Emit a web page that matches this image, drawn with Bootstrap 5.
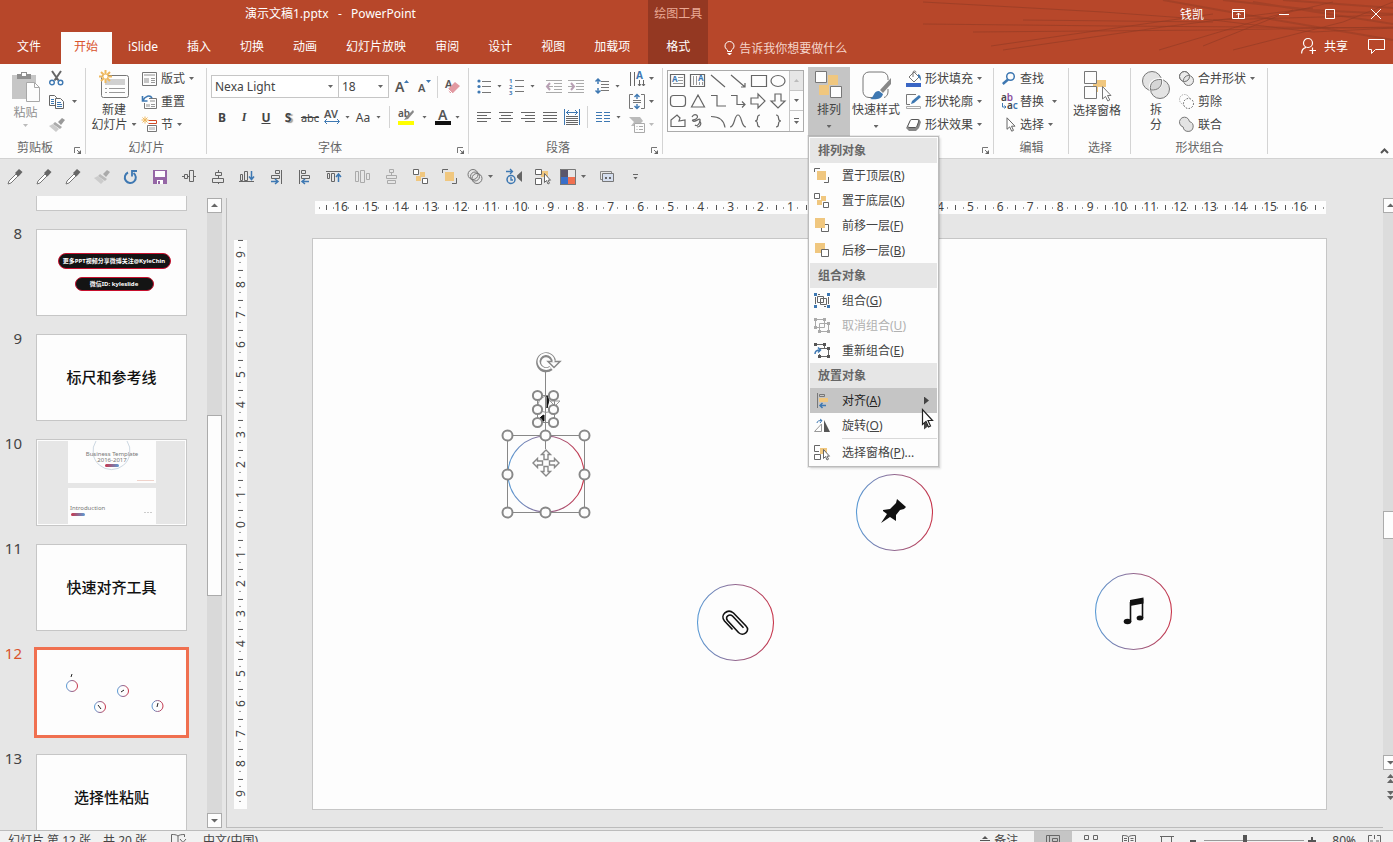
<!DOCTYPE html>
<html lang="zh-CN">
<head>
<meta charset="utf-8">
<meta name="viewport" content="width=device-width, initial-scale=1">
<title>演示文稿1.pptx - PowerPoint</title>
<link href="https://cdn.jsdelivr.net/npm/bootstrap@5.3.0/dist/css/bootstrap.min.css" rel="stylesheet">
<style>
:root{--brand:#b7472a;--brand-dark:#943822;--paper:#fdfdfd;--chrome:#e6e6e6;--line:#c6c6c6;--ink:#444;--blue:#3e78b2;--gold:#f0c77f}
html,body{height:100%;overflow:hidden}
body{font-family:"Noto Sans","Noto Sans CJK SC",sans-serif;font-size:12px;line-height:15px;color:var(--ink);background:var(--chrome)}
svg{display:block;flex:none;overflow:visible}
.app{height:calc(100vh + 8px)}
.btn{--bs-btn-padding-x:0;--bs-btn-padding-y:0;--bs-btn-border-width:0px;--bs-btn-border-radius:0;--bs-btn-font-size:12px;--bs-btn-line-height:15px;--bs-btn-color:var(--ink);--bs-btn-hover-bg:#d5d5d5;--bs-btn-active-bg:#c5c5c5;display:inline-flex;align-items:center;justify-content:center;flex:none;white-space:nowrap}
.btn:disabled{opacity:1;color:#8f8f8f}
.dn{width:5px;height:3px;background:#666;clip-path:polygon(0 0,100% 0,50% 100%);flex:none}
.dn.off{background:#bbb}
.g2{margin-left:2px}
/* title bar and tabs */
.topbar{background:var(--brand);color:#fff}
.topbar .btn{--bs-btn-color:#fff;--bs-btn-hover-color:#fff;--bs-btn-hover-bg:#a33f25}
.strokes{position:absolute;right:0;top:0;z-index:0}
.titlerow{height:32px;position:relative;overflow:hidden}
.doc-title{margin-left:245px;width:190px;line-height:28px;white-space:pre}
.winbtn{width:46px;height:28px}
.winbtn:last-child{margin-right:-6px}
.tabrow{height:32px;position:relative}
.tabs{gap:3px;padding-left:4px;--bs-nav-link-padding-x:13px;--bs-nav-link-padding-y:0;--bs-nav-link-color:#fff;--bs-nav-link-hover-color:#fff;--bs-nav-link-font-size:12px}
.tabs .nav-link{line-height:30px;height:32px;white-space:nowrap}
.tabs .nav-link.active{background:var(--paper);color:#d9532c;padding-right:14px}
.tabs .file-tab{margin-right:4px}
.ctx{position:relative;background:var(--brand-dark);width:60px;margin-left:2px;text-align:center}
.ctx .nav-link{padding:0;display:block}
.ctx-label{position:absolute;left:0;right:0;bottom:100%;height:32px;line-height:28px;background:var(--brand-dark);color:#eaa995}
.tell{color:#f5d5cb}
/* ribbon */
.ribbon{background:var(--paper);height:95px;border-bottom:1px solid #d2d2d2;position:relative}
.rgroup{flex:none;background:linear-gradient(#d4d4d4,#d4d4d4) right center/1px calc(100% - 8px) no-repeat;position:relative}
.gbody{height:72px;padding-top:3px}
.glabel{height:22px;line-height:24px;text-align:center;color:#666}
.launch{position:absolute;right:4px;bottom:3px;width:9px;height:9px}
.stack3{height:69px}
.stack3 .btn{height:23px}
.big{height:69px;flex-direction:column;justify-content:flex-start;padding-top:4px}
.big svg{margin-bottom:3px}
.big .dn{margin-top:4px}
.big .btn-line .dn{margin-top:0}
.btn-line{display:flex;align-items:center;gap:4px}
.w22{width:22px;height:22px}
.w16{width:16px;height:22px}
.combo{height:23px;border:1px solid var(--line);background:#fff;position:relative}
.combo + .combo{border-left:0}
.combo input{border:0;border-radius:0;background:none;padding:0 3px;font-size:12px;line-height:21px;color:var(--ink);min-height:0;height:21px;width:100%}
.combo .dn{position:absolute;right:5px;top:9px}
.vsep{width:1px;height:22px;background:#d4d4d4;flex:none}
.shapes{border:1px solid #ababab;width:137px;height:62px;margin-top:3px}
.shapes .rail{width:14px;border-left:1px solid var(--line)}
.rail .btn{height:20px;border-bottom:1px solid var(--line)}
.rail .btn:first-child{background:var(--chrome)}
.rail .btn:first-child .dn{transform:rotate(180deg)}
.rail .btn:last-child{border-bottom:0;flex-direction:column;gap:2px}
.arr{width:42px;background:#c5c5c5}
/* drop-down menu */
.arrmenu{display:block;position:absolute;left:0;top:69px;z-index:20;width:131px;min-width:0;margin:0;padding:1px;border:1px solid #bcbcbc;border-radius:0;background:var(--paper);box-shadow:0 0 0 1px rgba(0,0,0,.08),2px 2px 2px rgba(0,0,0,.1);font-size:12px;color:var(--ink)}
.arrmenu .dropdown-header{padding:0 0 0 8px;height:25px;line-height:25px;background:#e6e6e6;color:#666;font-size:12px;font-weight:600}
.arrmenu .dropdown-item{display:flex;align-items:center;height:25px;padding:0 0 0 4px;gap:12px;color:var(--ink);line-height:25px}
.arrmenu .dropdown-item.hot{background:#c5c5c5;color:#222}
.arrmenu .dropdown-item:disabled{color:#b1b1b1}
.arrmenu .dropdown-divider{margin:0 0 1px 32px;border-color:#d9d9d9;opacity:1}
.sub{width:5px;height:8px;background:#444;clip-path:polygon(0 0,100% 50%,0 100%);margin-left:auto;margin-right:8px}
.pointer{position:absolute;left:112px;top:271px;z-index:21}
/* quick access */
.qat{height:37px;padding-bottom:2px}
.qat .btn{width:29px;height:24px}
.qat .wide{width:32px;gap:5px;margin-right:3px}
.bar5{width:5px;height:1px;background:#666}
/* workspace */
.pane{width:226px;padding-right:4px}
.thumbs{overflow:hidden}
.slide-row{height:105px}
.slide-row:first-child{height:33px}
.num{width:22px;text-align:right;font-size:15px;line-height:20px;margin-top:-6px;flex:none;color:var(--ink)}
.thumb{width:151px;height:87px;margin-left:14px;background:var(--paper);border:1px solid var(--line);flex:none}
.slide-row:first-child .thumb{height:15px;border-top:0;margin-left:36px}
.slide-row.current .num{color:#d9532c}
.slide-row.current .thumb{outline:3px solid #f07050;outline-offset:-1px}
.kai{font-size:15px;line-height:20px;color:#111;font-weight:500;padding-bottom:2px}
.pills{padding:0 0 2px 5px}
.pill{background:#141414;border:1px solid #c8102e;color:#fff;border-radius:8px;font-size:6px;line-height:14px;font-weight:700;text-align:center;white-space:nowrap}
.pill.a{width:113px}
.pill.b{width:79px;line-height:12px}
.sbar{width:15px;background:#d9d9d9;margin:2px 0}
.sbar .btn,.sbar .knob{background:var(--paper);border:1px solid #ababab;width:15px}
.sbar .btn{height:15px}
.sbar .up{transform:rotate(180deg)}
.sbar .dn{width:8px;height:4px}
.editor{border-left:1px solid #bcbcbc;margin:2px 0;min-width:0}
.stage{border-bottom:1px solid #bcbcbc;padding-left:7px;min-width:0}
.vsb{width:10px;overflow:hidden;padding-bottom:20px}
.vsb .btn{width:15px}
.vsb .sbar{margin:0;background:#dcdcdc}
.drawcol{min-width:0;margin-left:-13px}
.hrule{height:13px;background:var(--paper);margin:3px 57px 0 81px;font-size:12px;line-height:12px}
.hrule span,.vrule span{flex:1 1 0;text-align:center;background-repeat:no-repeat;min-width:0;min-height:0}
.hrule span{background-image:linear-gradient(#555,#555),linear-gradient(#999,#999),linear-gradient(#999,#999);background-size:1px 5px,1px 2px,1px 2px;background-position:0 50%,25% 50%,75% 50%}
.hrule .edge{flex:0 0 11px;background-image:linear-gradient(#999,#999);background-size:1px 2px;background-position:4px 50%}
.hrule .edge.end{background-image:linear-gradient(#555,#555),linear-gradient(#999,#999);background-size:1px 5px,1px 2px;background-position:0 50%,8px 50%}
.vrule{width:13px;background:var(--paper);margin:42px 0 18px;font-size:12px;line-height:13px}
.vrule span{writing-mode:vertical-rl;transform:rotate(180deg);background-image:linear-gradient(#555,#555),linear-gradient(#999,#999),linear-gradient(#999,#999);background-size:5px 1px,2px 1px,2px 1px;background-position:50% 100%,50% 25%,50% 75%}
.slide{border:1px solid var(--line);background:var(--paper);margin:24px 56px 17px 78px;min-height:0}
.slide svg{width:100%;height:100%}
/* status bar */
.status{height:20px;border-top:1px solid #bcbcbc;background:#f1f1f1;line-height:18px}
.status .btn{height:19px}
.status .view{width:38px}
.status .view.on{background:#c5c5c5}
.pagecount{width:163px}
.zoomer{width:100px;height:19px;appearance:none;background:linear-gradient(#999,#999) center/100% 1px no-repeat;margin:0}
.zoomer::-webkit-slider-thumb{appearance:none;width:4px;height:11px;background:#555}
</style>
</head>
<body>
<div class="app d-flex flex-column">

<header class="topbar position-relative flex-shrink-0">
  <svg class="strokes" width="480" height="64" fill="none" stroke="#8f3a24" stroke-opacity=".6"><path d="M10 2 190 12 300 20 480 15M10 24 200 26 480 28M60 32 300 30 480 27" /><path d="M78 46 300 14 M90 50 250 27 400 8M110 20 300 22" stroke-width="1"/><path d="M250 0 340 16 480 40M310 0 400 10 480 14M340 2 480 24M370 0 480 8" stroke-width="2" stroke-opacity=".45"/><path d="M246 50 360 16 420 2M290 46 380 10M320 50 430 22 480 2M300 20 400 32 480 28"/></svg>
  <div class="titlerow d-flex align-items-start">
    <div class="doc-title">演示文稿1.pptx   -   PowerPoint</div>
    <div class="ms-auto d-flex">
      <button class="btn winbtn">钱凯</button>
      <button class="btn winbtn" aria-label="功能区显示选项"><svg width="13" height="10" fill="none" stroke="#fff"><path d="M.5.5h12v9H.5zM.5 2.5h12M6.500 9V4M4.500 6l2-2 2 2"/></svg></button>
      <button class="btn winbtn" aria-label="最小化"><svg width="10" height="10" stroke="#fff"><path d="M0 5.500h10"/></svg></button>
      <button class="btn winbtn" aria-label="最大化"><svg width="10" height="10" fill="none" stroke="#fff"><path d="M.5.5h9v9h-9z"/></svg></button>
      <button class="btn winbtn" aria-label="关闭"><svg width="10" height="10" stroke="#fff"><path d="M0 0 10 10M10 0 0 10"/></svg></button>
    </div>
  </div>
  <div class="tabrow d-flex">
    <nav class="nav tabs flex-nowrap">
      <a class="nav-link file-tab" href="#">文件</a><a class="nav-link active" href="#">开始</a><a class="nav-link" href="#">iSlide</a><a class="nav-link" href="#">插入</a><a class="nav-link" href="#">切换</a><a class="nav-link" href="#">动画</a><a class="nav-link" href="#">幻灯片放映</a><a class="nav-link" href="#">审阅</a><a class="nav-link" href="#">设计</a><a class="nav-link" href="#">视图</a><a class="nav-link" href="#">加载项</a>
      <div class="ctx"><div class="ctx-label">绘图工具</div><a class="nav-link" href="#">格式</a></div>
    </nav>
    <button class="btn ms-3 gap-1 tell"><svg width="11" height="14" fill="none" stroke="#fff"><path d="M3.500 10.500V9C1.500 7.500 1 6.500 1 5a4.500 4.500 0 0 1 9 0c0 1.500-.5 2.500-2.500 4v1.500zM3.500 12.500h4M4.500 13.500h2"/></svg>告诉我你想要做什么</button>
    <div class="ms-auto d-flex align-items-center pe-2 pb-1">
      <button class="btn me-3 gap-2"><svg width="15" height="16" fill="none" stroke="#fff" stroke-width="1.200"><circle cx="7" cy="5" r="4.500"/><path d="M.6 15.500c0-3.500 2-5.600 4.400-6.200M8.500 12.500h6.500M11.500 9.500v6.500"/></svg>共享</button>
      <button class="btn ms-1" aria-label="批注"><svg width="17" height="15" fill="none" stroke="#fff"><path d="M.5.5h16v10h-9l-4 4v-4h-3z"/></svg></button>
    </div>
  </div>
</header>

<div class="ribbon d-flex flex-shrink-0">
  <section class="rgroup" style="width:86px">
    <div class="gbody d-flex">
      <button class="btn big ms-1" disabled style="width:43px"><svg width="28" height="31"><path d="M0 4h24v8H14v16H0z" fill="#c6c6c6"/><path d="M5 3h4V1h6v2h4v5H5z" fill="#8f8f8f"/><path d="M10 2h4v3h-4z" fill="#fdfdfd"/><path d="M14.500 11.500h8l5 5v14h-13z" fill="#fdfdfd" stroke="#a8a8a8"/><path d="M22.500 11.500v5h5" fill="none" stroke="#a8a8a8"/></svg>粘贴<span class="dn off"></span></button>
      <div class="stack3 d-flex flex-column align-items-start g2">
        <button class="btn" aria-label="剪切"><svg width="15" height="15" fill="none"><path d="M3 0 9.500 9.500M12 0 5.500 9.500" stroke="#666" stroke-width="2"/><circle cx="3" cy="11.500" r="2.300" stroke="#3e78b2" stroke-width="1.400"/><circle cx="11.500" cy="11.500" r="2.300" stroke="#3e78b2" stroke-width="1.400"/></svg></button>
        <button class="btn" aria-label="复制"><svg width="15" height="14" fill="#fdfdfd" stroke="#666"><path d="M.5.5h5l2 2v8h-7z"/><path d="M6.500 3.500h5l3 3v7h-8z"/><path d="M2 4.500h3M2 6.500h3M2 8.500h3M8 7.500h4M8 9.500h5M8 11.500h5" stroke="#3e78b2"/></svg><span class="dn ms-2"></span></button>
        <button class="btn" disabled aria-label="格式刷"><svg width="16" height="14"><path d="m9 4 4-4 3 2-4 5z" fill="#999"/><path d="m6 4 7 5-2 2-7-5z" fill="#aaa"/><path d="m4 6 6 5-3 3-7-6z" fill="#ccc"/></svg></button>
      </div>
    </div>
    <div class="glabel pe-3">剪贴板</div>
    <button class="btn launch" aria-label="剪贴板选项"><svg width="7" height="7"><path d="M.5 6V.5H6M3 3l3 3" fill="none" stroke="#777"/><path d="M7 3v4H3z" fill="#666"/></svg></button>
  </section>

  <section class="rgroup" style="width:121px">
    <div class="gbody d-flex">
      <button class="btn big ms-1" style="width:48px"><svg width="30" height="28" fill="none"><rect x="2.500" y="4.500" width="27" height="22" rx="2" stroke="#777"/><path d="M6 8h20v6H6z" fill="#d0d0d0"/><path d="M6 17.500h2M10 17.500h16M6 21.500h2M10 21.500h16" stroke="#999"/><path d="M6.500-1v13M0 5.500h13M2 1l9 9M11 1l-9 9" stroke="#efb95f" stroke-width="2"/><circle cx="6.500" cy="5.500" r="2" fill="#fff"/></svg><span>新建</span><span class="btn-line">幻灯片<span class="dn"></span></span></button>
      <div class="stack3 d-flex flex-column align-items-start ms-1">
        <button class="btn"><svg class="me-1" width="15" height="14" fill="none"><path d="M.5.5h14v13H.5z" stroke="#777"/><path d="M2 2h11v2H2zM2 6h5v5H2z" fill="#c6c6c6"/><path d="M9 6.500h4M9 8.500h4M9 10.500h4" stroke="#999"/></svg>版式<span class="dn ms-1"></span></button>
        <button class="btn"><svg class="me-1" width="15" height="14" fill="none"><path d="M7 3.500h7.500v10h-12V8" stroke="#777"/><path d="M8 5h5v2H8zM4 9h4v3H4z" fill="#c6c6c6"/><path d="M9 9.500h4M9 11.500h4" stroke="#999"/><path d="M1 5.500C3 1 8-.5 10 3M.5 1v5h5" stroke="#3e78b2" stroke-width="1.600"/></svg>重置</button>
        <button class="btn"><svg class="me-1" width="15" height="15" fill="none"><path d="M6.500 3.500h8v3h-8" stroke="#d24a26"/><path d="M5.500 8.500h9v6h-9z" stroke="#777"/><path d="M7 10h6v3H7z" fill="#d0d0d0"/><path d="M3-.5v7M-.5 3h7M.5.500l5 5M5.500.500l-5 5" stroke="#efb95f"/></svg>节<span class="dn ms-1"></span></button>
      </div>
    </div>
    <div class="glabel">幻灯片</div>
  </section>

  <section class="rgroup" style="width:262px">
    <div class="gbody">
      <div class="d-flex align-items-center pt-2 ms-1">
        <div class="combo" style="width:128px"><input class="form-control" aria-label="字体" value="Nexa Light"><span class="dn"></span></div>
        <div class="combo" style="width:50px"><input class="form-control" aria-label="字号" value="18"><span class="dn"></span></div>
        <button class="btn w22 g2" aria-label="增大字号"><svg width="14" height="16"><text x="0" y="13" font-size="14" font-weight="600" fill="#555">A</text><path d="M9 4h5l-2.500-3z" fill="#3e78b2"/></svg></button>
        <button class="btn w22" aria-label="减小字号"><svg width="13" height="16"><text x="0" y="13" font-size="11" font-weight="600" fill="#555">A</text><path d="M8 1h5l-2.500 3z" fill="#3e78b2"/></svg></button>
        <span class="vsep g2"></span>
        <button class="btn w22 ms-1" aria-label="清除格式"><svg width="16" height="16"><text x="0" y="9" font-size="11" font-weight="600" fill="#555">A</text><path d="m3 10 7-7 5 4-7 7H5z" fill="#e29aa2"/><path d="m3 10 4 4" stroke="#fff"/></svg></button>
      </div>
      <div class="d-flex align-items-center mt-2 ms-1" style="height:22px">
        <button class="btn w22 fw-bold">B</button>
        <button class="btn w22 fst-italic fw-bold" style="font-family:'Liberation Serif',serif">I</button>
        <button class="btn w22 fw-bold text-decoration-underline">U</button>
        <button class="btn w22 fw-bold" style="text-shadow:2px 1px 1px #999">S</button>
        <button class="btn w22 text-decoration-line-through" style="font-size:11px">abc</button>
        <button class="btn w22" aria-label="字符间距"><svg width="16" height="16"><text x="0" y="9" font-size="11" font-weight="600" fill="#555">AV</text><path d="M1 12.500h14M3 10 .5 12.500 3 15M13 10l2.500 2.500L13 15" fill="none" stroke="#3e78b2"/></svg></button><span class="dn g2"></span>
        <button class="btn w22 g2">Aa</button><span class="dn g2"></span>
        <span class="vsep mx-2"></span>
        <button class="btn w16" aria-label="突出显示"><svg width="16" height="16"><text x="0" y="8" font-size="10" font-weight="600" fill="#555">ab</text><path d="M15 1 8 8l-2 3 4-1 6-7z" fill="#888"/><path d="M0 12h16v4H0z" fill="#ff0"/></svg></button><span class="dn ms-2"></span>
        <button class="btn w16 ms-2" aria-label="字体颜色"><svg width="16" height="16"><text x="3" y="11" font-size="14" font-weight="600" fill="#555">A</text><path d="M0 12h16v4H0z" fill="#111"/></svg></button><span class="dn ms-1"></span>
      </div>
    </div>
    <div class="glabel pe-3">字体</div>
    <button class="btn launch" aria-label="字体选项"><svg width="7" height="7"><path d="M.5 6V.5H6M3 3l3 3" fill="none" stroke="#777"/><path d="M7 3v4H3z" fill="#666"/></svg></button>
  </section>

  <section class="rgroup" style="width:194px">
    <div class="gbody d-flex">
      <div class="ms-1">
        <div class="d-flex align-items-center pt-2" style="height:30px">
          <button class="btn w22" aria-label="项目符号"><svg width="14" height="15"><g fill="#3e78b2"><circle cx="2" cy="2" r="1.600"/><circle cx="2" cy="7.500" r="1.600"/><circle cx="2" cy="13" r="1.600"/></g><path d="M5 2.500h9M5 7.500h9M5 13.500h9" stroke="#777"/></svg></button><span class="dn g2"></span>
          <button class="btn w22 ms-1" aria-label="编号"><svg width="14" height="16"><g font-size="6" font-weight="700" fill="#3e78b2"><text x="-1" y="5">1</text><text x="-1" y="11">2</text><text x="-1" y="17">3</text></g><path d="M5 2.500h9M5 8.500h9M5 13.500h9" stroke="#777"/></svg></button><span class="dn g2"></span>
          <button class="btn w22 ms-2" disabled aria-label="减少缩进"><svg width="16" height="13" fill="none" stroke="#aaa"><path d="M0 .5h16M8 3.500h8M8 6.500h8M8 9.500h8M0 12.500h16M1 6.500h6" /><path d="m4 3-3 3.500L4 10" stroke="#b9a0b4" stroke-width="2"/></svg></button>
          <button class="btn w22" disabled aria-label="增加缩进"><svg width="16" height="13" fill="none" stroke="#aaa"><path d="M0 .5h16M8 3.500h8M8 6.500h8M8 9.500h8M0 12.500h16M0 6.500h6"/><path d="m3 3 3 3.500L3 10" stroke="#b9a0b4" stroke-width="2"/></svg></button>
          <button class="btn w22 ms-1" aria-label="行距"><svg width="14" height="16" fill="none"><path d="M3 1v5M3 10v5M.5 3.500 3 1l2.500 2.500M.5 12.500 3 15l2.500-2.500" stroke="#3e78b2" stroke-width="1.500"/><path d="M6 3.500h8M6 6.500h8M6 9.500h8M6 12.500h8" stroke="#777"/></svg></button><span class="dn g2"></span>
        </div>
        <div class="d-flex align-items-center mt-2" style="height:24px">
          <button class="btn w22" aria-label="左对齐"><svg width="14" height="11" stroke="#666"><path d="M0 .5h14M0 3.500h10M0 6.500h14M0 9.500h10"/></svg></button>
          <button class="btn w22" aria-label="居中"><svg width="14" height="11" stroke="#666"><path d="M0 .5h14M2 3.500h10M0 6.500h14M2 9.500h10"/></svg></button>
          <button class="btn w22" aria-label="右对齐"><svg width="14" height="11" stroke="#666"><path d="M0 .5h14M4 3.500h10M0 6.500h14M4 9.500h10"/></svg></button>
          <button class="btn w22" aria-label="两端对齐"><svg width="14" height="11" stroke="#666"><path d="M0 .5h14M0 3.500h14M0 6.500h14M0 9.500h14"/></svg></button>
          <button class="btn w22" aria-label="分散对齐"><svg width="16" height="16" fill="none"><path d="M.5 0v16M15.500 0v16M2 3.500h12M5 1 2.500 3.500 5 6M11 1l2.500 2.500L11 6" stroke="#3e78b2"/><path d="M2 7.500h12M2 9.500h12M2 11.500h12M2 13.500h12M2 15.500h12" stroke="#666"/></svg></button>
          <span class="vsep mx-1"></span>
          <button class="btn w22" aria-label="分栏"><svg width="14" height="11" stroke="#3e78b2"><path d="M0 .5h6M8 .5h6M0 3.500h6M8 3.500h6M0 6.500h6M8 6.500h6M0 9.500h6M8 9.500h6"/></svg></button><span class="dn g2"></span>
        </div>
      </div>
      <div class="stack3 d-flex flex-column ms-2">
        <button class="btn gap-1" aria-label="文字方向"><svg width="16" height="16"><path d="M1.500 1v14M5.500 1v14M10.500 9v6M14.500 9v6M9 13l1.500 2 1.500-2M13 13l1.500 2 1.500-2" stroke="#666" fill="none"/><text x="7" y="8" font-size="10" font-weight="700" fill="#3e78b2">A</text></svg><span class="dn"></span></button>
        <button class="btn gap-1" aria-label="对齐文本"><svg width="16" height="16" fill="none"><path d="M4 .5H.5v14H4M12 .5h3.500v14H12M4 6.500h8M4 8.500h8" stroke="#777"/><path d="M8 1v4M8 10v4M5.500 3 8 .5 10.500 3M5.500 12 8 14.500l2.500-2.500" stroke="#3e78b2" stroke-width="1.400"/></svg><span class="dn"></span></button>
        <button class="btn gap-1" disabled aria-label="转换为SmartArt"><svg width="16" height="16"><path d="M0 0h11l3 4-2 2H6v3H2l3-4z" fill="#bbb"/><path d="M5.500 6.500h10v9h-10z" fill="#fdfdfd" stroke="#aaa"/><path d="M7.500 9.500h1M10 9.500h4M7.500 12.500h1M10 12.500h4" stroke="#aaa"/></svg><span class="dn off"></span></button>
      </div>
    </div>
    <div class="glabel pe-3">段落</div>
    <button class="btn launch" aria-label="段落选项"><svg width="7" height="7"><path d="M.5 6V.5H6M3 3l3 3" fill="none" stroke="#777"/><path d="M7 3v4H3z" fill="#666"/></svg></button>
  </section>

  <section class="rgroup" style="width:331px">
    <div class="gbody d-flex">
      <div class="shapes d-flex ms-1">
        <svg width="121" height="60" fill="none" stroke="#666" stroke-width="1.200">
          <path d="M2.500 3.500h14v12h-14zM22.500 3.500h14v12h-14z"/><path d="M10 6.500h5M10 9.500h5M5 12.500h10" stroke="#999" stroke-width="1"/><path d="M25.500 5v9M28.500 5v9M31.500 11v3M34.500 11v3" stroke="#999" stroke-width="1"/>
          <g font-size="8" font-weight="700" fill="#3e78b2" stroke="none"><text x="4" y="11">A</text><text x="30" y="10">A</text></g>
          <path d="M43 4l14 12M63 4l14 12M73 16h4v-4M83.500 4.500h15v11h-15z"/><ellipse cx="110" cy="10" rx="7" ry="5.500"/>
          <rect x="2.500" y="24.500" width="15" height="11" rx="3"/><path d="M30 24l6.500 12h-13zM43 24.500h6v10.500h9M63 24.500h6v9h8M74 30.500l3 3-3 3M83 27h7v-4l7 7-7 7v-4h-7zM107 23h6v7h4l-7 7-7-7h4z"/>
          <path d="M3 55.500V49l6-5 3 3-1 3 6-1v6.500zM24 46c2-4 7-2 5 1s-6 1-4 3 8-5 7 0-4 5-5 4M31 50c3 1 2 6-2 6M43 45.500c8 0 13 4 14 11M62 56c5 0 4-12 8-12s3 12 8 12M92 44c-5 0 0 6-5 6 5 0 0 6 5 6M108 44c5 0 0 6 5 6-5 0 0 6-5 6"/>
        </svg>
        <div class="rail d-flex flex-column">
          <button class="btn" disabled aria-label="上一行"><span class="dn off"></span></button>
          <button class="btn" aria-label="下一行"><span class="dn"></span></button>
          <button class="btn" aria-label="其他"><span class="bar5"></span><span class="dn"></span></button>
        </div>
      </div>
      <div class="dropdown ms-1">
        <button class="btn big arr" aria-expanded="true"><svg width="28" height="28"><path d="M13 4h10v10H13zM4 14h10v10H4z" fill="#f0c77f"/><path d="M.5.5h11v11H.5zM15.500 15.500h11v11h-11z" fill="#fdfdfd" stroke="#777"/></svg><span>排列</span><span class="dn mt-2"></span></button>
        <div class="dropdown-menu arrmenu">
          <h6 class="dropdown-header">排列对象</h6>
          <button class="dropdown-item"><svg width="16" height="15"><path d="M3 3h9v9H3z" fill="#f0c77f"/><path d="M.5 4V.5H6M10 14.500h4.500V9" fill="none" stroke="#666"/></svg><span>置于顶层(<u>R</u>)</span></button>
          <button class="dropdown-item"><svg width="16" height="15"><path d="M7 3h5v5H7zM3 7h5v5H3z" fill="#f0c77f"/><path d="M.5.5h5v5h-5zM9.500 9.500h5v5h-5z" fill="#fff" stroke="#666"/></svg><span>置于底层(<u>K</u>)</span></button>
          <button class="dropdown-item"><svg width="16" height="15"><path d="M7.500 6.500h7v7h-7z" fill="#fff" stroke="#666"/><path d="M1 0h10v10H1z" fill="#f0c77f"/></svg><span>前移一层(<u>F</u>)</span></button>
          <button class="dropdown-item"><svg width="16" height="15"><path d="M1 0h10v10H1z" fill="#f0c77f"/><path d="M7.500 6.500h7v7h-7z" fill="#fff" stroke="#666"/></svg><span>后移一层(<u>B</u>)</span></button>
          <h6 class="dropdown-header">组合对象</h6>
          <button class="dropdown-item"><svg width="16" height="15" fill="none"><path d="M3.500 3.500h6v6h-6zM6.500 5.500h6v6h-6zM4 1.500h2M1.500 4v7M14.500 4v7M10 13.500h2" stroke="#666"/><path d="M0 0h3v3H0zM13 0h3v3h-3zM0 12h3v3H0zM13 12h3v3h-3z" fill="#3e78b2"/></svg><span>组合(<u>G</u>)</span></button>
          <button class="dropdown-item" disabled><svg width="16" height="15" fill="none"><path d="M1.500 1.500h9v8h-9zM5.500 5.500h9v8h-9z" stroke="#aaa"/><path d="M0 0h3v3H0zM9 0h3v3H9zM0 8h3v3H0zM4 12h3v3H4zM13 4h3v3h-3zM13 12h3v3h-3z" fill="#aaa"/></svg><span>取消组合(<u>U</u>)</span></button>
          <button class="dropdown-item"><svg width="16" height="15" fill="none"><path d="M2 1.500h8.500V5M6 5.500h8.500v8h-9V11" stroke="#666"/><path d="M0 0h3v3H0zM9 0h3v3H9zM4 12h3v3H4zM13 4h3v3h-3zM13 12h3v3h-3z" fill="#555"/><path d="M1 11c0-3 2-4 5-4M4 4.500 6.500 7 4 9.500" stroke="#3e78b2" stroke-width="1.500"/></svg><span>重新组合(<u>E</u>)</span></button>
          <h6 class="dropdown-header">放置对象</h6>
          <button class="dropdown-item hot"><svg width="16" height="15" fill="none"><path d="M3.500 0v15" stroke="#777"/><path d="M5.500 1.500h5v2h-5z" stroke="#777"/><path d="M5 5h9v4H5z" fill="#f0c77f"/><path d="M6 12.500h6M8.500 10 6 12.500 8.500 15" stroke="#3e78b2" stroke-width="1.500"/></svg><span>对齐(<u>A</u>)</span><span class="sub"></span></button>
          <button class="dropdown-item"><svg width="16" height="13" fill="none"><path d="M7.500 5v7.500H.5z" stroke="#999"/><path d="M10 1v12h6z" fill="#555"/><path d="M3 4C3 2 5 1.500 8 1.500M6 0l2 1.500L6 4" stroke="#3e78b2"/></svg><span>旋转(<u>O</u>)</span><span class="sub"></span></button>
          <hr class="dropdown-divider">
          <button class="dropdown-item"><svg width="16" height="15"><path d="M6 3h7v6H6z" fill="#f0c77f"/><path d="M6 .5H.5v6H5M.5 9.500h6v5h-6z" fill="none" stroke="#666"/><path d="M9.500 4.500v9l2-2 1.500 3.500 1.500-.8-1.500-3h2.500z" fill="#fff" stroke="#666"/></svg><span>选择窗格(<u>P</u>)...</span></button>
          <svg class="pointer" width="13" height="20"><path d="M1.500 1.500v15l3.500-3 2.500 5.500 2-1-2.500-5.500h4.500z" fill="#fff" stroke="#222" stroke-width="1.200"/></svg>
        </div>
      </div>
      <button class="btn big" style="width:52px"><svg width="30" height="28" fill="none"><path d="M12 26.500H8a6 6 0 0 1-6-6V7a6 6 0 0 1 6-6h13a6 6 0 0 1 6 6v2M27 18v3c0 3-2 5-4 5.500" stroke="#777"/><path d="M30 7v6l-8 9-3-3z" fill="#888"/><path d="m18 20 4 3c-1 5-7 6-13 5 4-1 3-8 9-8z" fill="#3e78b2"/></svg><span>快速样式</span><span class="dn mt-2"></span></button>
      <div class="stack3 d-flex flex-column align-items-start ms-1">
        <button class="btn"><svg class="me-1" width="15" height="15"><path d="M8 1 3 6l5 5 5-5z" fill="#fff" stroke="#777"/><path d="M7 6V1.500a1.500 1.500 0 0 1 3 0" fill="none" stroke="#777"/><path d="M12 3c3 1 3 4 3 7-1-1-1-3-3-4z" fill="#3e78b2"/><path d="M0 12h15v4H0z" fill="#3a66c4"/></svg>形状填充<span class="dn ms-1"></span></button>
        <button class="btn"><svg class="me-1" width="15" height="15" fill="none"><path d="M10 .5H.5v10H4" stroke="#777"/><path d="m5 10 1-3 7-6 2 2-7 6z" fill="#3e78b2"/><path d="M.5 12.500h14v2H.5z" stroke="#aaa"/></svg>形状轮廓<span class="dn ms-1"></span></button>
        <button class="btn"><svg class="me-1" width="15" height="13"><path d="M5 1h8l2 3-2 6-3 3H3L0 10z" fill="#888"/><path d="M6 1.500h5c2 0 2 1 1.500 2.500L11 8c-.5 1-1 1.500-2 1.500H4C2 9.500 1.500 9 2 7.500L4 3c.5-1 1-1.500 2-1.500z" fill="#fff" stroke="#555"/></svg>形状效果<span class="dn ms-1"></span></button>
      </div>
    </div>
    <div class="glabel">绘图</div>
    <button class="btn launch" aria-label="绘图选项"><svg width="7" height="7"><path d="M.5 6V.5H6M3 3l3 3" fill="none" stroke="#777"/><path d="M7 3v4H3z" fill="#666"/></svg></button>
  </section>

  <section class="rgroup" style="width:75px">
    <div class="gbody">
      <div class="stack3 d-flex flex-column align-items-start ms-2">
        <button class="btn"><svg class="me-1" width="14" height="13" fill="none" stroke="#3e78b2"><circle cx="8.500" cy="4.500" r="3.800" stroke-width="1.500"/><path d="M6 7.500.8 12" stroke-width="2.500"/></svg>查找</button>
        <button class="btn"><svg width="18" height="16" font-weight="600" font-size="10"><text x="-1" y="7" fill="#444">a<tspan fill="#8a4fa0">b</tspan></text><text x="5" y="15" fill="#444">a<tspan fill="#3e78b2">c</tspan></text><path d="M.5 9v4H4M2.500 11.500 4 13l-1.500 1.500" fill="none" stroke="#3e78b2"/></svg>替换<span class="dn ms-2 me-1"></span></button>
        <button class="btn"><svg class="ms-1 me-1" width="10" height="15"><path d="M1 .8v11.500l2.700-2.400 2 4.300 1.800-.8-2-4.200H9z" fill="#fff" stroke="#666"/></svg>选择<span class="dn ms-1"></span></button>
      </div>
    </div>
    <div class="glabel">编辑</div>
  </section>

  <section class="rgroup" style="width:62px">
    <div class="gbody ps-1">
      <button class="btn big"><svg width="26" height="29" fill="none"><path d="M9 9h13v7H14v5H9z" fill="#f0c77f"/><path d="M.5.500h12v12H.5zM.5 15.500h12v12H.5z" fill="#fdfdfd" stroke="#777"/><path d="M18.500 15.500v12.500l3-2.500 2.300 4.500 2-1-2.300-4.500h3.500z" fill="#fdfdfd" stroke="#777"/></svg><span>选择窗格</span></button>
    </div>
    <div class="glabel">选择</div>
  </section>

  <section class="rgroup" style="width:137px">
    <div class="gbody d-flex">
      <button class="btn big ms-1" style="width:42px"><svg width="28" height="28" stroke="#777"><circle cx="10" cy="10" r="9.500" fill="#e3e3e3"/><circle cx="18" cy="18" r="9.500" fill="#e3e3e3"/><path d="M8.500 18c-1-6 3-10 11-9.500 1 6-3 10-11 9.500z" fill="#d0d0d0" stroke="#fdfdfd" stroke-width="3"/><path d="M8.500 19c-1-7 3-11 11-10.500 1 7-3 11-11 10.500z" fill="#d6d6d6"/></svg><span>拆</span><span>分</span></button>
      <div class="stack3 d-flex flex-column align-items-start g2">
        <button class="btn"><svg class="me-1" width="15" height="15" fill="#e3e3e3" fill-opacity=".7" stroke="#777"><circle cx="5.500" cy="5.500" r="5"/><circle cx="9.500" cy="9.500" r="5"/><circle cx="5.500" cy="5.500" r="5" fill="none"/></svg>合并形状<span class="dn ms-1"></span></button>
        <button class="btn"><svg class="me-1" width="15" height="15" fill="none"><circle cx="5.500" cy="5.500" r="5" stroke="#aaa" stroke-dasharray="1.500 1"/><circle cx="9.500" cy="9.500" r="5" fill="#fdfdfd" stroke="#555" stroke-dasharray="1.500 1.500"/></svg>剪除</button>
        <button class="btn"><svg class="me-1" width="15" height="15"><path d="M9.500 2.200A5 5 0 1 0 4.200 10 5 5 0 1 0 10.500 4.600z" fill="#e3e3e3" stroke="#777"/></svg>联合</button>
      </div>
    </div>
    <div class="glabel">形状组合</div>
  </section>
  <button class="btn ms-auto align-self-end me-1 mb-1" aria-label="折叠功能区"><svg width="9" height="6" fill="none" stroke="#555" stroke-width="2"><path d="m1 5 3.500-3.500L8 5"/></svg></button>
</div>

<div class="qat d-flex align-items-center flex-shrink-0">
  <button class="btn" aria-label="填充取色"><svg width="16" height="16"><path d="m1 15 1-3 7-7 2 2-7 7z" fill="#fff" stroke="#777"/><path d="m8 4 4-4 3.500 3-4 4.500z" fill="#666"/></svg></button>
  <button class="btn" aria-label="轮廓取色"><svg width="16" height="16"><path d="m1 15 1-3 7-7 2 2-7 7z" fill="#fff" stroke="#777"/><path d="m8 4 4-4 3.500 3-4 4.500z" fill="#666"/></svg></button>
  <button class="btn" aria-label="文字取色"><svg width="16" height="16"><path d="m1 15 1-3 7-7 2 2-7 7z" fill="#fff" stroke="#777"/><path d="m8 4 4-4 3.500 3-4 4.500z" fill="#666"/></svg></button>
  <button class="btn" disabled aria-label="格式刷"><svg width="16" height="14"><path d="m9 4 4-4 3 2-4 5z" fill="#aaa"/><path d="m6 4 7 5-2 2-7-5z" fill="#bbb"/><path d="m4 6 6 5-3 3-7-6z" fill="#ccc"/></svg></button>
  <button class="btn" aria-label="重复"><svg width="13" height="14" fill="none" stroke="#3e78b2" stroke-width="2"><path d="M4 2.500A5.500 5.500 0 1 0 9.500 3"/><path d="M13 1H8v5.500" stroke-width="1.800"/></svg></button>
  <button class="btn" aria-label="保存"><svg width="14" height="14"><path d="M0 0h14v14H0z" fill="#9566a5"/><path d="M2 1h10v6H2zM4 10h6v4H4z" fill="#fdfdfd"/><path d="M5 11h2v3H5z" fill="#9566a5"/></svg></button>
  <button class="btn" aria-label="垂直居中"><svg width="14" height="13" fill="none" stroke="#666"><path d="M0 6.500h2M5 6.500h2M12 6.500h2M2.500 4.500h3v4h-3zM7.500.500h4v11h-4z"/></svg></button>
  <button class="btn" aria-label="水平居中"><svg width="12" height="14" fill="none" stroke="#666"><path d="M6.500 0v2M6.500 6v2M6.500 12v2M3.500 2.500h6v3h-6zM.5 8.500h11v4H.5z"/></svg></button>
  <button class="btn" aria-label="底端对齐"><svg width="15" height="13" fill="none" stroke="#666"><path d="M0 11.500h15M1.500 4.500h2v6h-2zM5.500 1.500h3v9h-3z"/><path d="M12.500 1v8M10 6.500l2.500 3 2.500-3" stroke="#3e78b2" stroke-width="1.500"/></svg></button>
  <button class="btn" aria-label="右对齐"><svg width="12" height="14" fill="none" stroke="#666"><path d="M11.500 0v14M5.500.500h4v3h-4zM1.500 5.500h8v3h-8z"/><path d="M1 11.500h6M5 9l3 2.500L5 14" stroke="#3e78b2" stroke-width="1.500"/></svg></button>
  <button class="btn" aria-label="左对齐"><svg width="12" height="14" fill="none" stroke="#666"><path d="M.5 0v14M2.500.500h4v3h-4zM2.500 5.500h8v3h-8z"/><path d="M4 11.500h6M6 9l-3 2.500L6 14" stroke="#3e78b2" stroke-width="1.500"/></svg></button>
  <button class="btn" aria-label="顶端对齐"><svg width="15" height="12" fill="none" stroke="#666"><path d="M0 .5h15M1.500 2.500h2v5h-2zM5.500 2.500h3v8h-3z"/><path d="M12.500 3v8M10 6l2.500-3L15 6" stroke="#3e78b2" stroke-width="1.500"/></svg></button>
  <button class="btn" disabled aria-label="横向分布"><svg width="15" height="13" fill="none" stroke="#aaa"><path d="M.5 1.500h3v10h-3zM5.500.500h4v12h-4zM11.500 3.500h3v6h-3z"/></svg></button>
  <button class="btn" disabled aria-label="纵向分布"><svg width="11" height="15" fill="none" stroke="#aaa"><path d="M3.500.500h4v3h-4zM.5 6.500h10v3H.5zM1.500 11.500h8v3h-8zM5.500 4v2"/></svg></button>
  <button class="btn" aria-label="置于底层"><svg width="15" height="15"><path d="M7 3h5v5H7zM3 7h5v5H3z" fill="#f0c77f"/><path d="M.5.5h5v5h-5zM9.500 9.500h5v5h-5z" fill="#fff" stroke="#666"/></svg></button>
  <button class="btn" aria-label="置于顶层"><svg width="15" height="15"><path d="M3 3h9v9H3z" fill="#f0c77f"/><path d="M.5 4V.5H6M10 14.500h4.500V9" fill="none" stroke="#666"/></svg></button>
  <button class="btn wide" aria-label="合并形状"><svg width="16" height="15" fill="none" stroke="#777"><circle cx="6" cy="5.500" r="5"/><circle cx="10" cy="9.500" r="5"/><circle cx="8" cy="7.500" r="4.500"/></svg><span class="dn"></span></button>
  <button class="btn" aria-label="动画窗格"><svg width="16" height="16" fill="none"><circle cx="5" cy="10.500" r="4" stroke="#3e78b2" stroke-width="1.500"/><path d="M5 8v3h2M0 2.500h6M4 0l2.500 2.500L4 5" stroke="#3e78b2" stroke-width="1.300"/><path d="M16 2v11l-5-4.500v-2z" fill="#666"/></svg></button>
  <button class="btn" aria-label="选择窗格"><svg width="16" height="16"><path d="M6 2h7v6H6z" fill="#f0c77f"/><path d="M.5.500h6v5h-6zM.5 9.500h6v6h-6z" fill="#fff" stroke="#666"/><path d="M9.500 4.500v9l2-2 1.500 3.500 1.500-.8-1.500-3h2.500z" fill="#fff" stroke="#666"/></svg></button>
  <button class="btn wide" aria-label="颜色"><svg width="16" height="16"><path d="M0 0h8v8H0z" fill="#5a566b"/><path d="M8 0h8v8H8z" fill="#e6e6e6"/><path d="M0 8h8v8H0z" fill="#3a6fc8"/><path d="M8 8h8v8H8z" fill="#f07050"/><path d="M.5.500h15v15H.5z" fill="none" stroke="#777"/></svg><span class="dn"></span></button>
  <button class="btn" aria-label="幻灯片大小"><svg width="14" height="11"><path d="M.5.500h11v8H.5z" fill="none" stroke="#888"/><path d="M2.500 2.500h11v8h-11z" fill="#d5deee" stroke="#777"/><path d="M5 6h2v2H5zM9 6h2v2H9z" fill="#666"/></svg></button>
  <button class="btn flex-column" style="gap:2px" aria-label="自定义快速访问工具栏"><span class="bar5"></span><span class="dn"></span></button>
</div>

<main class="d-flex flex-grow-1" style="min-height:0">
  <aside class="pane d-flex flex-shrink-0">
    <div class="thumbs flex-grow-1">
      <div class="slide-row d-flex"><div class="thumb"></div></div>
      <div class="slide-row d-flex"><div class="num">8</div><div class="thumb pills d-flex flex-column align-items-center justify-content-center gap-2"><div class="pill a">更多PPT视频分享微博关注@KyleChin</div><div class="pill b">微信ID: kyleslide</div></div></div>
      <div class="slide-row d-flex"><div class="num">9</div><div class="thumb d-flex align-items-center justify-content-center kai">标尺和参考线</div></div>
      <div class="slide-row d-flex"><div class="num">10</div><div class="thumb">
        <svg width="149" height="85"><defs><linearGradient id="cap"><stop offset="0" stop-color="#c8354a"/><stop offset="1" stop-color="#5b9bd5"/></linearGradient></defs><path d="M1 1h147v83H1z" fill="#e6e6e6"/><path d="M31 1h88v42H31zM31 48h88v36H31z" fill="#fdfdfd"/><path d="M59 1a18.500 18.500 0 1 0 31 0" fill="none" stroke="#cdd8e2"/><g font-size="6" fill="#777"><text x="75" y="16" text-anchor="middle">Business Template</text><text x="75" y="22" text-anchor="middle">2016-2017</text><text x="33" y="70">Introduction</text></g><rect x="68" y="24" width="14" height="3" rx="1.500" fill="url(#cap)"/><rect x="34" y="73" width="14" height="3" rx="1.500" fill="url(#cap)"/><path d="M100 40.500h17" stroke="#e5b5a8" stroke-width=".6"/><path d="M107 72.500h9" stroke="#ccc" stroke-dasharray="2 1"/></svg></div></div>
      <div class="slide-row d-flex"><div class="num">11</div><div class="thumb d-flex align-items-center justify-content-center kai">快速对齐工具</div></div>
      <div class="slide-row d-flex current"><div class="num">12</div><div class="thumb">
        <svg width="149" height="85" fill="none" stroke="url(#ring)"><circle cx="35" cy="36" r="5.500"/><circle cx="63" cy="57" r="5.500"/><circle cx="86" cy="41" r="5.500"/><circle cx="120.500" cy="56" r="5.500"/><path d="m61 55 3 4M84 42l3-2M120 57l1-4M34 27l1-3" stroke="#222"/></svg></div></div>
      <div class="slide-row d-flex"><div class="num">13</div><div class="thumb d-flex align-items-center justify-content-center kai">选择性粘贴</div></div>
    </div>
    <div class="sbar d-flex flex-column">
      <button class="btn up" aria-label="向上滚动"><span class="dn"></span></button>
      <div style="flex:203"></div><div class="knob" style="flex:179"></div><div style="flex:218"></div>
      <button class="btn" aria-label="向下滚动"><span class="dn"></span></button>
    </div>
  </aside>

  <section class="editor d-flex flex-grow-1">
    <div class="stage d-flex flex-grow-1">
      <div class="vrule d-flex flex-column" id="vrule"></div>
      <div class="drawcol d-flex flex-column flex-grow-1">
        <div class="hrule d-flex" id="hrule"></div>
        <div class="slide flex-grow-1">
          <svg viewBox="0 0 1013 570" fill="none">
            <defs><linearGradient id="ring"><stop offset="0" stop-color="#5b9bd5"/><stop offset="1" stop-color="#c8354a"/></linearGradient></defs>
            <g stroke="url(#ring)" stroke-width="1.100"><circle cx="233" cy="235" r="38"/><circle cx="581.500" cy="273.500" r="38"/><circle cx="422.500" cy="383.500" r="38"/><circle cx="820.500" cy="372.500" r="38"/></g>
            <path d="M584 260l9 8-2 2-4 1-4 5v6l-6-4-9 6 6-9-4-3v-1l7-1 6-6z" fill="#111"/>
            <path d="M419.500 390.500 411.500 382c-5-6 3-13 9-8l12.500 13c5 5-3 11-7.500 6.500L414.500 381.500c-3-4 2-7 5-4.500l11 11.700" stroke="#111" stroke-width="1.600"/>
            <path d="M829.500 360v19M817.500 363v20" stroke="#111" stroke-width="1.600"/><path d="M817 361l13.500-2.500v6L817 367z" fill="#111"/><ellipse cx="814.500" cy="382.500" rx="3.800" ry="2.800" fill="#111"/><ellipse cx="827" cy="379" rx="3.400" ry="2.500" fill="#111"/>
            <path d="M232.500 133v77M194.500 196.500h77v77h-77zM224.500 156.500h17v27h-17z" stroke="#888"/>
            <path d="M240 161a8 8 0 1 0-1 10M237 162h10l-5 5z" stroke="#999"/>
            <path d="M226 180l3-3 2-1v6h-4zM234 157v12l2-8z" fill="#111" stroke="#111"/>
            <g fill="#fdfdfd" stroke="#888" stroke-width="2"><circle cx="194.500" cy="196.500" r="5"/><circle cx="232.500" cy="196.500" r="5"/><circle cx="271.500" cy="196.500" r="5"/><circle cx="194.500" cy="235.500" r="5"/><circle cx="271.500" cy="235.500" r="5"/><circle cx="194.500" cy="273.500" r="5"/><circle cx="232.500" cy="273.500" r="5"/><circle cx="271.500" cy="273.500" r="5"/><circle cx="224.500" cy="156.500" r="4.600"/><circle cx="240.500" cy="156.500" r="4.600"/><circle cx="224.500" cy="170.500" r="4.600"/><circle cx="240.500" cy="170.500" r="4.600"/><circle cx="224.500" cy="183.500" r="4.600"/><circle cx="240.500" cy="183.500" r="4.600"/></g>
            <path d="M238 129A7.500 7.500 0 1 1 240.500 122" stroke="#888" stroke-width="5"/><path d="M235 122.500h12l-6 6z" fill="#fdfdfd" stroke="#888" stroke-width="1.500"/><path d="M237.500 128.500A7.500 7.500 0 1 1 240.500 123.500" stroke="#fdfdfd" stroke-width="2"/>
            <path d="M233 211l4.500 4.500h-2.500v5h-4v-5h-2.500zM233 237l4.500-4.500h-2.500v-5h-4v5h-2.500zM220 224l4.500-4.500v2.500h5v4h-5v2.500zM246 224l-4.500-4.500v2.500h-5v4h5v2.500z" fill="#fdfdfd" stroke="#888" stroke-width="1.400"/>
          </svg>
        </div>
      </div>
    </div>
    <div class="vsb d-flex flex-column">
      <div class="sbar d-flex flex-column flex-grow-1">
        <button class="btn up" aria-label="向上"><span class="dn"></span></button>
        <div style="flex:300"></div><div class="knob" style="flex:26"></div><div style="flex:217"></div>
        <button class="btn" aria-label="向下"><span class="dn"></span></button>
      </div>
      <button class="btn mt-1" aria-label="上一张幻灯片"><svg width="7" height="9" fill="#666"><path d="M0 4 3.500 0 7 4zM0 9l3.500-4L7 9z"/></svg></button>
      <button class="btn my-2" aria-label="下一张幻灯片"><svg width="7" height="9" fill="#666"><path d="M0 0h7L3.500 4zM0 5h7L3.500 9z"/></svg></button>
    </div>
  </section>
</main>

<footer class="status d-flex align-items-center flex-shrink-0 ps-2">
  <span class="pagecount text-nowrap">幻灯片 第 12 张，共 20 张</span>
  <svg width="16" height="14" fill="none" stroke="#666"><path d="M7 13V2C5 .5 3 .5.500 .5v11C3 11.500 5 12 7 13zM7 2c1-1 3-1.500 6.500-1.500V3M9 5l6 7M15 5l-6 7"/></svg>
  <span class="ms-3">中文(中国)</span>
  <button class="btn ms-auto gap-1 me-3"><svg width="10" height="9"><path d="M5 0 8 3H2z" fill="#555"/><path d="M0 4.500h10M0 7.500h10" stroke="#555"/></svg>备注</button>
  <button class="btn view on" aria-label="普通视图"><svg width="14" height="12" fill="none" stroke="#666"><path d="M.5.500h13v11H.5zM3.500 1v11M6.500 3.500h5v3h-5z"/></svg></button>
  <button class="btn view" aria-label="浏览视图"><svg width="14" height="12" fill="none" stroke="#666"><path d="M.5.500h4v4h-4zM9.500.500h4v4h-4zM.5 8.500h4v4h-4zM9.500 8.500h4v4h-4z"/></svg></button>
  <button class="btn view" aria-label="阅读视图"><svg width="14" height="12" fill="none" stroke="#666"><path d="M.5.500C3 .5 5 .5 6.500 2 8 .5 10 .5 13.500.5v10C10 10.500 8 10.500 6.500 12 5 10.500 3 10.500.5 10.500zM6.500 2v10M2 3.500h3M2 5.500h3M2 7.500h3M8.500 3.500h3M8.500 5.500h3M8.500 7.500h3"/></svg></button>
  <button class="btn view" aria-label="幻灯片放映"><svg width="14" height="12" fill="none" stroke="#666"><path d="M0 1.500h14M1.500 2v6.500h10V2M6.500 9v3"/></svg></button>
  <button class="btn ms-1 me-2" aria-label="缩小"><svg width="6" height="8"><path d="M0 4h6" stroke="#555" stroke-width="2"/></svg></button>
  <input class="zoomer" type="range" min="0" max="100" value="40" aria-label="显示比例">
  <button class="btn ms-1" aria-label="放大"><svg width="8" height="8"><path d="M0 4h8M4 0v8" stroke="#555" stroke-width="2"/></svg></button>
  <button class="btn ms-3">80%</button>
  <button class="btn ms-2 me-2 px-1" aria-label="适应窗口"><svg width="13" height="12" fill="none" stroke="#666"><path d="M4 .5H.5V11.500h12V.500H9M6.500 0v4M2 6h3M8 6h3M6.500 8v3"/></svg></button>
</footer>
</div>

<script src="https://cdn.jsdelivr.net/npm/bootstrap@5.3.0/dist/js/bootstrap.bundle.min.js"></script>
<script>
function fillRuler(id, max) {
  const el = document.getElementById(id);
  for (let n = -max; n <= max; n++) {
    const s = document.createElement('span');
    s.textContent = Math.abs(n);
    el.append(s);
  }
  return el;
}
fillRuler('vrule', 9);
const h = fillRuler('hrule', 16);
const a = document.createElement('span'); a.className = 'edge'; h.prepend(a);
const b = document.createElement('span'); b.className = 'edge end'; h.append(b);
</script>
</body>
</html>
